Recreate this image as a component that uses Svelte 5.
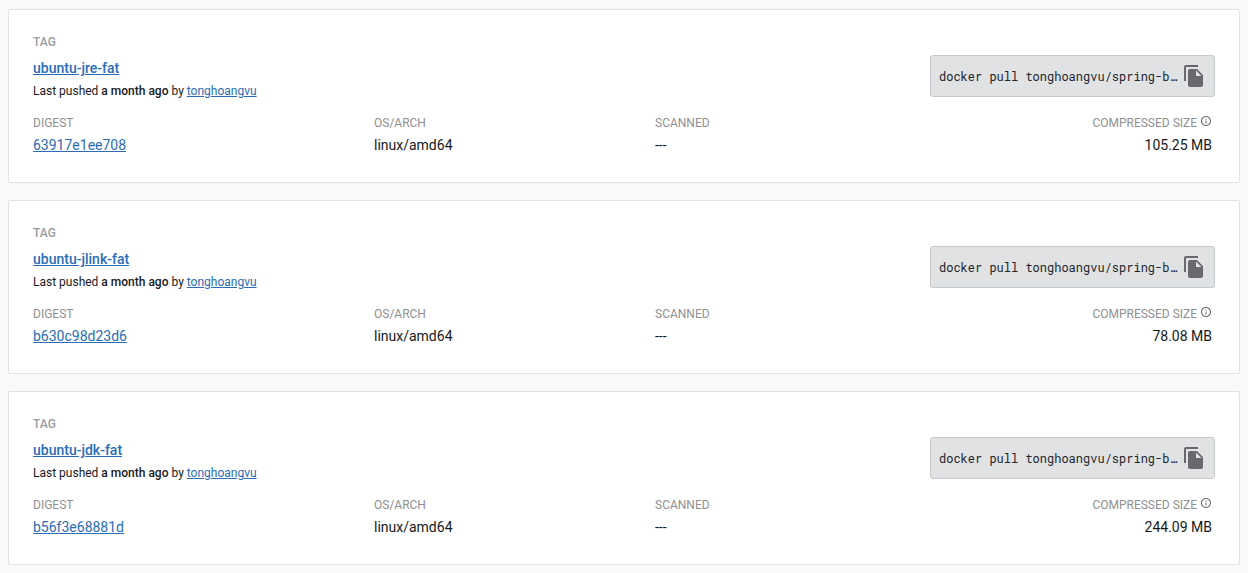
<script lang="ts">
  const user = "tonghoangvu"
  const command = "docker pull tonghoangvu/spring-b…"

  const tags = [
    { name: "ubuntu-jre-fat", digest: "63917e1ee708", size: "105.25 MB" },
    { name: "ubuntu-jlink-fat", digest: "b630c98d23d6", size: "78.08 MB" },
    { name: "ubuntu-jdk-fat", digest: "b56f3e68881d", size: "244.09 MB" },
  ]

  const copy = () => {
    navigator.clipboard?.writeText(command)
  }
</script>

<main class="tags">
  {#each tags as tag}
    <article class="card">
      <header class="top">
        <div class="info">
          <div class="label strong">TAG</div>
          <a class="name" href="#{tag.name}">{tag.name}</a>
          <p class="pushed">
            Last pushed <b>a month ago</b> by <a href="#{user}">{user}</a>
          </p>
        </div>
        <div class="pull">
          <input readonly value={command} aria-label="Pull command" />
          <button type="button" aria-label="Copy" onclick={copy}>
            <svg viewBox="0 0 24 24" width="24" height="24">
              <path d="M16 1H4c-1.1 0-2 .9-2 2v14h2V3h12V1zm-1 4 6 6v10c0 1.1-.9 2-2 2H7.99C6.89 23 6 22.1 6 21l.01-14c0-1.1.89-2 1.99-2h7zm-1 7h5.5L14 6.5V12z" />
            </svg>
          </button>
        </div>
      </header>

      <dl class="details">
        <div>
          <dt class="label">DIGEST</dt>
          <dd><a href="#{tag.digest}">{tag.digest}</a></dd>
        </div>
        <div>
          <dt class="label">OS/ARCH</dt>
          <dd>linux/amd64</dd>
        </div>
        <div>
          <dt class="label">SCANNED</dt>
          <dd>---</dd>
        </div>
        <div class="size">
          <dt class="label">
            COMPRESSED SIZE
            <svg viewBox="0 0 24 24" width="12" height="12">
              <path d="M11 17h2v-6h-2v6zm1-15C6.48 2 2 6.48 2 12s4.48 10 10 10 10-4.48 10-10S17.52 2 12 2zm0 18c-4.41 0-8-3.59-8-8s3.59-8 8-8 8 3.59 8 8-3.59 8-8 8zM11 9h2V7h-2v2z" />
            </svg>
          </dt>
          <dd>{tag.size}</dd>
        </div>
      </dl>
    </article>
  {/each}
</main>

<style>
  :global(body) {
    margin: 0;
    background: #f9f9fa;
  }

  .tags {
    display: flex;
    flex-direction: column;
    gap: 17px;
    padding: 9px 8px;
    font-family: Roboto, "Liberation Sans", sans-serif;
    font-size: 14px;
    line-height: 20px;
    color: #17191e;
  }

  .card {
    padding: 22px 24px 27px;
    background: #fff;
    border: 1px solid #e1e2e6;
    border-radius: 2px;
  }

  .top {
    display: flex;
    justify-content: space-between;
    align-items: flex-end;
  }

  .label {
    display: block;
    font-size: 12px;
    line-height: 20px;
    color: #8f9093;
  }

  .strong {
    font-weight: 500;
    color: #9c9c9d;
  }

  a {
    color: #2a6cb8;
    text-decoration: underline;
  }

  .name {
    display: block;
    width: fit-content;
    margin-top: 6px;
    font-weight: 500;
  }

  .pushed {
    margin: 4px 0 0;
    font-size: 12px;
    line-height: 18px;
  }

  .pushed b {
    font-weight: 500;
  }

  .pull {
    display: flex;
    align-items: center;
    box-sizing: border-box;
    width: 285px;
    height: 42px;
    margin-bottom: 3px;
    padding: 0 8px;
    background: #e1e2e3;
    border: 1px solid #c6c9cc;
    border-radius: 3px;
  }

  .pull input {
    flex: 1;
    min-width: 0;
    padding: 0;
    border: 0;
    outline: 0;
    background: none;
    font-family: "Roboto Mono", "DejaVu Sans Mono", monospace;
    font-size: 12px;
    color: #22252b;
    text-overflow: ellipsis;
  }

  .pull button {
    display: flex;
    padding: 0;
    border: 0;
    background: none;
    cursor: pointer;
  }

  .pull svg {
    fill: #67696c;
  }

  .details {
    display: grid;
    grid-template-columns: 341fr 281fr 280fr 280fr;
    margin: 13px 0 0;
  }

  dd {
    margin: 2px 0 0;
  }

  .size {
    padding-right: 3px;
    text-align: right;
  }

  .size svg {
    fill: #66686c;
  }
</style>
